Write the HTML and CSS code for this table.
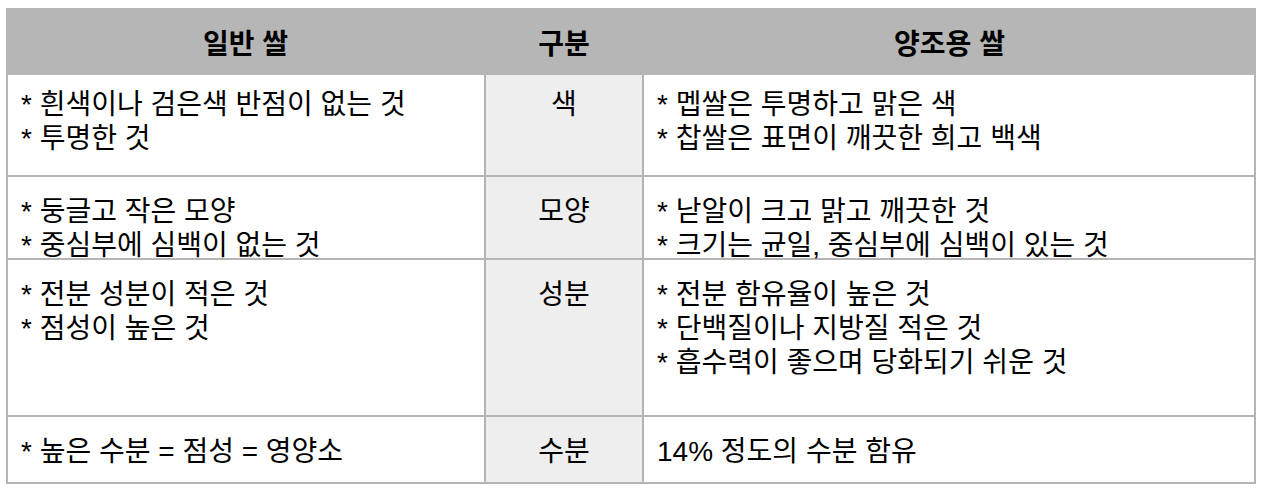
FILE: index.html
```html
<!DOCTYPE html>
<html lang="ko">
<head>
<meta charset="utf-8">
<link rel="stylesheet" href="styles.css">
</head>
<body>
<div class="table">
  <div class="th">일반 쌀</div>
  <div class="th">구분</div>
  <div class="th">양조용 쌀</div>

  <div class="td r1">* 흰색이나 검은색 반점이 없는 것<br>* 투명한 것</div>
  <div class="td mid r1">색</div>
  <div class="td r1">* 멥쌀은 투명하고 맑은 색<br>* 찹쌀은 표면이 깨끗한 희고 백색</div>

  <div class="td r2">* 둥글고 작은 모양<br>* 중심부에 심백이 없는 것</div>
  <div class="td mid r2">모양</div>
  <div class="td r2">* 낟알이 크고 맑고 깨끗한 것<br>* 크기는 균일, 중심부에 심백이 있는 것</div>

  <div class="td r3">* 전분 성분이 적은 것<br>* 점성이 높은 것</div>
  <div class="td mid r3">성분</div>
  <div class="td r3">* 전분 함유율이 높은 것<br>* 단백질이나 지방질 적은 것<br>* 흡수력이 좋으며 당화되기 쉬운 것</div>

  <div class="td r4">* 높은 수분 = 점성 = 영양소</div>
  <div class="td mid r4">수분</div>
  <div class="td r4">14% 정도의 수분 함유</div>
</div>
</body>
</html>
```

FILE: styles.css
```css
html, body {
  margin: 0;
  padding: 0;
  background: #ffffff;
}
body {
  padding: 8px 0 0 6px;
  font-family: "Liberation Sans", "Noto Sans CJK KR", sans-serif;
  color: #000000;
}
.table {
  width: 1250px;
  display: grid;
  grid-template-columns: 476px 156px 610px;
  grid-template-rows: 63px 100px 81px 155px 65px;
  gap: 2px;
  padding: 2px;
  box-sizing: border-box;
  background: #b5b5b5;
}
.th {
  background: #b6b6b6;
  font-weight: bold;
  font-size: 28px;
  display: flex;
  align-items: center;
  justify-content: center;
  margin: -2px -1px;
}
.th:first-child { margin-left: -2px; }
.th:nth-child(3) { margin-right: -2px; }
.td {
  background: #ffffff;
  font-size: 28px;
  line-height: 34px;
  padding: 18px 13px 0;
}
.td.r1 {
  padding-top: 13px;
}
.mid {
  background: #eeeeee;
  text-align: center;
}
```
